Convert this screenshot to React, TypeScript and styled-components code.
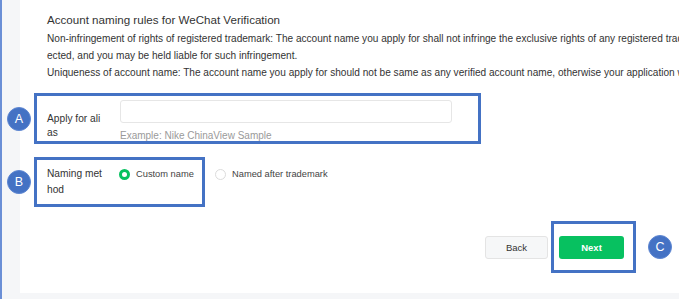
import * as React from 'react'
import styled, { createGlobalStyle } from 'styled-components'

const GlobalStyle = createGlobalStyle`
    body {
        margin: 0;
        font-family: "Liberation Sans", Arial, sans-serif;
        color: #333;
    }
`

const App = () => (
    <Page>
        <GlobalStyle />
        <Panel>
            <Rules>
                <Title>Account naming rules for WeChat Verification</Title>
                <RuleLine>
                    Non-infringement of rights of registered trademark: The account name you apply for shall not infringe the exclusive rights of any registered trademark, otherwise your application will be rej
                </RuleLine>
                <RuleLine>ected, and you may be held liable for such infringement.</RuleLine>
                <RuleLine $gap>
                    Uniqueness of account name: The account name you apply for should not be same as any verified account name, otherwise your application will be rejected.
                </RuleLine>
            </Rules>

            <Row>
                <Highlight $width={447} $height={51} $padding="4px 0 0 10px">
                    <Badge $side="left">A</Badge>
                    <Label $width={73} $top={12} $lineHeight={14}>
                        <LabelText>Apply for alias</LabelText>
                    </Label>
                    <Field>
                        <Input type="text" />
                        <Hint>Example: Nike ChinaView Sample</Hint>
                    </Field>
                </Highlight>
            </Row>

            <Row $top={13}>
                <Highlight $width={171} $height={50} $padding="6px 0 0 10px">
                    <Badge $side="left">B</Badge>
                    <Label $width={72} $top={0} $lineHeight={16}>
                        <LabelText>Naming method</LabelText>
                    </Label>
                    <RadioOption>
                        <Radio $checked />
                        <RadioText>Custom name</RadioText>
                    </RadioOption>
                </Highlight>
                <RadioOption $offset={10}>
                    <Radio />
                    <RadioText>Named after trademark</RadioText>
                </RadioOption>
            </Row>

            <Footer>
                <BackButton>Back</BackButton>
                <Highlight $width={85} $height={52} $padding="0 0 0 5px" $center>
                    <NextButton>Next</NextButton>
                    <Badge $side="right">C</Badge>
                </Highlight>
            </Footer>
        </Panel>
    </Page>
)

const Page = styled.div`
    width: 679px;
    height: 299px;
    box-sizing: border-box;
    overflow: hidden;
    background-color: #f5f6f8;
    border-left: 2px solid #6b8fd6;
    padding: 0 0 6px 18px;
`

const Panel = styled.div`
    width: 659px;
    height: 293px;
    background-color: #fff;
`

const Rules = styled.div`
    padding: 11px 0 0 27px;
    overflow: hidden;
`

const Title = styled.h3`
    margin: 0;
    font-size: 11.6px;
    font-weight: normal;
    line-height: 18px;
    color: #333;
`

const RuleLine = styled.p<{ $gap?: boolean }>`
    margin: 3px 0 0;
    font-size: 10.1px;
    line-height: 14px;
    white-space: nowrap;
    color: #333;
    & + & {
        margin-top: ${p => (p.$gap ? '3px' : '0')};
    }
`

const Row = styled.div<{ $top?: number }>`
    display: flex;
    align-items: flex-start;
    margin: ${p => p.$top ?? 13}px 0 0 14px;
`

const Highlight = styled.div<{
    $width: number
    $height: number
    $padding: string
    $center?: boolean
}>`
    position: relative;
    display: flex;
    align-items: ${p => (p.$center ? 'center' : 'flex-start')};
    box-sizing: border-box;
    width: ${p => p.$width}px;
    height: ${p => p.$height}px;
    padding: ${p => p.$padding};
    border: 3px solid #4472c4;
`

const Badge = styled.span<{ $side: 'left' | 'right' }>`
    position: absolute;
    top: 50%;
    ${p => (p.$side === 'left' ? 'left: -30px;' : 'left: calc(100% + 15px);')}
    transform: translateY(-50%);
    display: flex;
    justify-content: center;
    align-items: center;
    width: 24px;
    height: 24px;
    box-sizing: border-box;
    border-radius: 50%;
    border: 1px solid #5d86d2;
    background-color: #4472c4;
    color: #fff;
    font-size: 12.5px;
`

const Label = styled.div<{ $width: number; $top: number; $lineHeight: number }>`
    flex: none;
    width: ${p => p.$width}px;
    padding-top: ${p => p.$top}px;
    font-size: 10.2px;
    line-height: ${p => p.$lineHeight}px;
    color: #333;
`

const LabelText = styled.span`
    display: block;
    width: 57px;
    word-break: break-all;
`

const Field = styled.div`
    display: flex;
    flex-direction: column;
`

const Input = styled.input`
    box-sizing: border-box;
    width: 332px;
    height: 23px;
    margin: 0;
    border: 1px solid #e6e6e6;
    border-radius: 3px;
    outline: none;
`

const Hint = styled.span`
    margin-top: 7px;
    font-size: 10px;
    line-height: 12px;
    color: #9a9a9a;
`

const RadioOption = styled.label<{ $offset?: number }>`
    display: flex;
    align-items: center;
    height: 16px;
    margin-left: ${p => p.$offset ?? 0}px;
    margin-top: ${p => (p.$offset ? 9 : 0)}px;
`

const Radio = styled.span<{ $checked?: boolean }>`
    box-sizing: border-box;
    width: 11px;
    height: 11px;
    border-radius: 50%;
    border: ${p => (p.$checked ? '3.5px solid #07c160' : '1px solid #dcdcdc')};
    background-color: #fff;
`

const RadioText = styled.span`
    margin-left: 6px;
    font-size: 9.3px;
    color: #444;
`

const Footer = styled.div`
    display: flex;
    justify-content: flex-end;
    align-items: center;
    margin-top: 14px;
    padding-right: 43px;
`

const Button = styled.button`
    box-sizing: border-box;
    width: 63px;
    height: 23px;
    border-radius: 3px;
    font-family: "Liberation Sans", Arial, sans-serif;
    font-size: 9.5px;
    cursor: pointer;
`

const BackButton = styled(Button)`
    margin-right: 3px;
    border: 1px solid #e4e4e4;
    background-color: #f6f7f8;
    color: #333;
`

const NextButton = styled(Button)`
    width: 65px;
    border: none;
    background-color: #07c160;
    color: #fff;
    font-weight: bold;
`

export default App
